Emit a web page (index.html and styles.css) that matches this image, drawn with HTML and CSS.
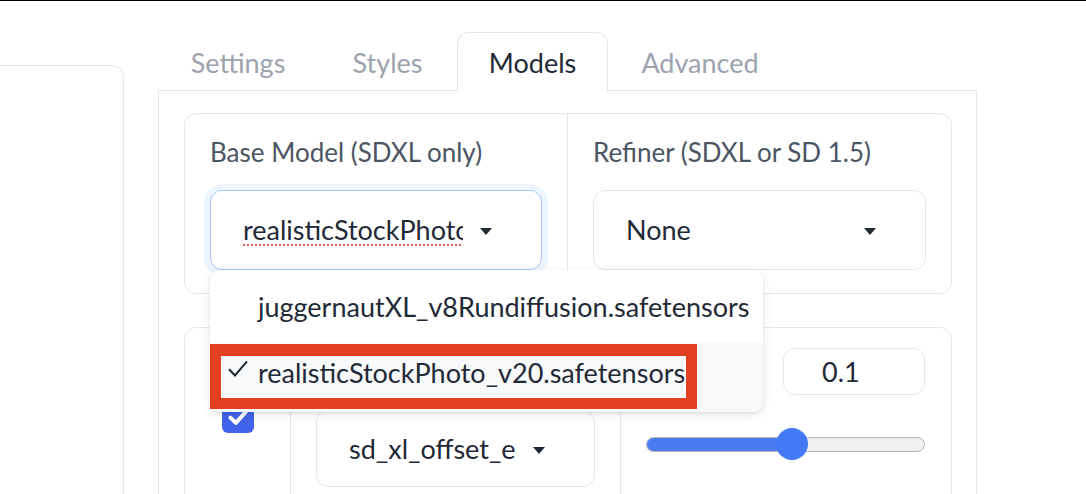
FILE: index.html
```html
<!DOCTYPE html>
<html lang="en">
<head>
<meta charset="utf-8">
<title>Models</title>
<link rel="stylesheet" href="styles.css">
</head>
<body>
<div class="page">
  <aside class="side-panel"></aside>
  <section class="tabs">
    <nav class="tab-bar">
      <button class="tab tab-settings">Settings</button>
      <button class="tab tab-styles">Styles</button>
      <button class="tab tab-models is-active">Models</button>
      <button class="tab tab-advanced">Advanced</button>
    </nav>
    <div class="tab-panel">
      <div class="form-row">
        <div class="cell cell-base">
          <span class="label">Base Model (SDXL only)</span>
          <div class="dropdown">
            <div class="select is-focused">
              <span class="select-value"><span class="misspelled">realisticStockPhoto_v20.safetensors</span></span>
              <span class="caret"></span>
            </div>
            <ul class="options">
              <li class="option">juggernautXL_v8Rundiffusion.safetensors</li>
              <li class="option is-selected"><svg class="check" viewBox="0 0 20 17" width="20" height="17"><path d="M1 9.2 L7 15.4 L19 1.4" fill="none" stroke="#1f2937" stroke-width="2"/></svg>realisticStockPhoto_v20.safetensors</li>
              <li class="highlight"></li>
            </ul>
          </div>
        </div>
        <div class="cell cell-refiner">
          <span class="label">Refiner (SDXL or SD 1.5)</span>
          <div class="select">
            <span class="select-value">None</span>
            <span class="caret"></span>
          </div>
        </div>
      </div>

      <div class="form-row lora-row">
        <div class="cell cell-check">
          <span class="checkbox">
            <svg viewBox="0 0 16 16" width="32" height="32"><path d="M4.2 8.3 L6.9 10.9 L11.9 5.4" fill="none" stroke="#fff" stroke-width="2" stroke-linecap="round" stroke-linejoin="round"/></svg>
          </span>
        </div>
        <div class="cell cell-lora">
          <span class="label">LoRA 1</span>
          <div class="select select-lora">
            <span class="select-value">sd_xl_offset_example-lora_1.0.safetensors</span>
            <span class="caret"></span>
          </div>
        </div>
        <div class="cell cell-weight">
          <div class="weight-head">
            <span class="label">Weight</span>
            <span class="number">0.1</span>
          </div>
          <div class="slider">
            <div class="slider-track">
              <div class="slider-fill" style="width: 146px"></div>
            </div>
            <div class="slider-thumb" style="left: 130px"></div>
          </div>
        </div>
      </div>
    </div>
  </section>
</div>
</body>
</html>
```

FILE: styles.css
```css
* { box-sizing: border-box; }

html, body { margin: 0; padding: 0; }

body {
  width: 1086px;
  height: 494px;
  overflow: hidden;
  background: #fff;
  border-top: 1px solid #000;
  font-family: Lato, "Liberation Sans", sans-serif;
  color: #1f2937;
}

.page {
  display: flex;
  align-items: flex-start;
}

.side-panel {
  flex: none;
  width: 140px;
  height: 600px;
  margin-left: -16px;
  margin-top: 64px;
  border: 1px solid #e5e7eb;
  border-radius: 12px;
}

.tabs {
  flex: none;
  width: 819px;
  margin-left: 34px;
  margin-top: 31px;
}

.tab-bar {
  display: flex;
  height: 59px;
  margin-bottom: -1px;
  position: relative;
  z-index: 1;
}

.tab {
  height: 59px;
  padding: 3px 0 0;
  border: 1px solid transparent;
  border-bottom: none;
  border-radius: 12px 12px 0 0;
  background: transparent;
  font-family: inherit;
  font-size: 27px;
  line-height: 1.2;
  color: #9ca3af;
  text-align: center;
}

.tab-settings { width: 160px; }
.tab-styles { width: 139px; }
.tab-models { width: 151px; }
.tab-advanced { width: 184px; }

.tab.is-active {
  border-color: #e5e7eb;
  background: #fff;
  color: #1f2937;
}

.tab-panel {
  height: 420px;
  padding: 22px 24px 0 25px;
  border: 1px solid #e5e7eb;
  border-bottom: none;
}

.form-row {
  display: flex;
  border: 1px solid #e5e7eb;
  border-radius: 12px;
}

.cell {
  padding: 23px 25px 23px;
}

.cell-base {
  width: 383px;
  border-right: 1px solid #e5e7eb;
}

.cell-refiner {
  flex: 1;
}

.label {
  display: block;
  font-size: 26px;
  line-height: 30px;
  color: #4b5563;
  margin-bottom: 23px;
  white-space: nowrap;
}

.dropdown {
  position: relative;
}

.select {
  display: flex;
  align-items: center;
  height: 80px;
  padding: 0 49px 0 32px;
  border: 1px solid #e5e7eb;
  border-radius: 12px;
  background: #fff;
}

.select.is-focused {
  border-color: #a3c5fa;
  box-shadow: 0 0 0 6px #eef4fe;
}

.select-value {
  flex: 1;
  min-width: 0;
  overflow: hidden;
  white-space: nowrap;
  font-size: 27px;
  line-height: 36px;
  color: #1f2937;
}

.misspelled {
  text-decoration: underline dotted #e4574b;
  text-decoration-thickness: 2px;
  text-underline-offset: 4px;
}

.caret {
  flex: none;
  width: 0;
  height: 0;
  margin-left: 17px;
  margin-top: 3px;
  border-left: 6px solid transparent;
  border-right: 6px solid transparent;
  border-top: 7px solid #1f2937;
}

.options {
  position: absolute;
  top: 100%;
  left: 0;
  z-index: 5;
  width: 553px;
  margin: 0;
  padding: 0;
  list-style: none;
  background: #fff;
  border-radius: 10px;
  box-shadow: 0 3px 10px rgba(0, 0, 0, 0.10), 0 1px 3px rgba(0, 0, 0, 0.06);
}

.option {
  position: relative;
  display: flex;
  align-items: center;
  height: 72px;
  padding-left: 48px;
  font-size: 27px;
  white-space: nowrap;
  color: #1f2937;
}

.option.is-selected {
  height: 70px;
  padding-bottom: 10px;
  background: #f8f9fa;
  border-radius: 0 0 10px 10px;
}

.check {
  position: absolute;
  left: 18px;
  margin-top: -7px;
}

.highlight {
  position: absolute;
  left: 0;
  top: 74px;
  width: 487px;
  height: 65px;
  border: 11px solid #e0401f;
  border-top-width: 12px;
}

.lora-row {
  margin-top: 33px;
  height: 300px;
}

.cell-check {
  width: 106px;
  display: flex;
  justify-content: center;
  align-items: flex-start;
  padding: 73px 0 0;
  border-right: 1px solid #e5e7eb;
}

.checkbox {
  display: block;
  width: 32px;
  height: 32px;
  border-radius: 6px;
  background: #4263eb;
}

.checkbox svg { display: block; }

.cell-lora {
  width: 330px;
  padding-top: 29px;
  border-right: 1px solid #e5e7eb;
}

.select-lora {
  height: 77px;
}

.cell-weight {
  flex: 1;
  padding: 20px 26px 0 25px;
}

.weight-head {
  display: flex;
  align-items: center;
  justify-content: space-between;
}

.weight-head .label {
  margin: 0;
}

.number {
  display: flex;
  align-items: center;
  width: 142px;
  height: 47px;
  padding-left: 38px;
  border: 1px solid #e5e7eb;
  border-radius: 12px;
  font-size: 27px;
  color: #1f2937;
}

.slider {
  position: relative;
  height: 32px;
  margin-top: 33px;
  display: flex;
  align-items: center;
}

.slider-track {
  width: 100%;
  height: 15px;
  border: 1px solid #b4b4b4;
  border-radius: 8px;
  background: #efefef;
  overflow: hidden;
}

.slider-fill {
  margin: -1px 0 0 -1px;
  height: 15px;
  background: #4a7bf0;
  border: 1px solid #4566c4;
  border-radius: 8px 0 0 8px;
}

.slider-thumb {
  position: absolute;
  top: 0;
  width: 32px;
  height: 32px;
  border-radius: 50%;
  background: #4479f5;
}
```
